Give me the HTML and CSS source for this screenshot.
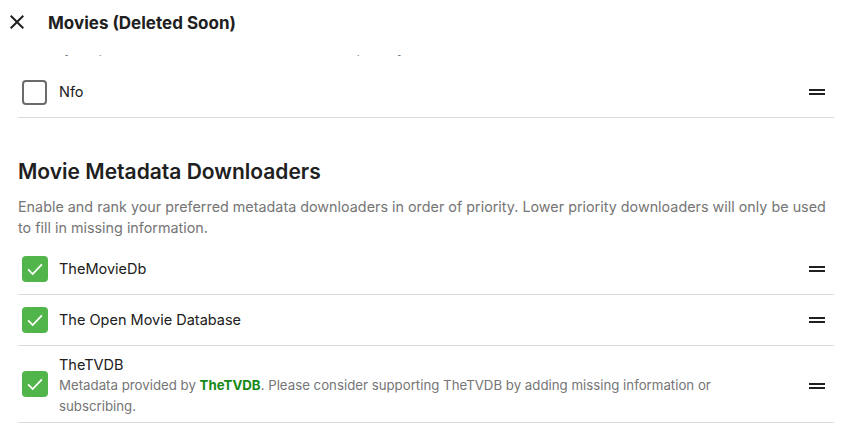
FILE: index.html
```html
<!DOCTYPE html>
<html>
<head>
<meta charset="utf-8">
<link rel="stylesheet" href="styles.css">
</head>
<body>
<header class="topbar">
  <button class="close-btn" aria-label="Close">
    <svg viewBox="0 0 24 24" width="24" height="24"><path d="M19 6.41 17.59 5 12 10.59 6.41 5 5 6.41 10.59 12 5 17.59 6.41 19 12 13.41 17.59 19 19 17.59 13.41 12z" fill="#202020"/></svg>
  </button>
  <h1 class="title">Movies (Deleted Soon)</h1>
</header>
<main class="content">
  <section class="section first">
    <p class="desc hidden-line">Select your preferred metadata savers in order of priority.</p>
    <ul class="list">
      <li class="row">
        <span class="cb"></span>
        <div class="row-body"><div class="row-title">Nfo</div></div>
        <svg class="handle" viewBox="0 0 24 24" width="24" height="24"><path d="M20 9H4v2h16V9zM4 15h16v-2H4v2z" fill="#202020"/></svg>
      </li>
    </ul>
  </section>
  <section class="section">
    <h2 class="heading">Movie Metadata Downloaders</h2>
    <p class="desc last">Enable and rank your preferred metadata downloaders in order of priority. Lower priority downloaders will only be used to fill in missing information.</p>
    <ul class="list">
      <li class="row">
        <span class="cb checked"><svg viewBox="0 0 24 24" width="22" height="22"><path d="M4.5 12.5l5 5L19.5 7" fill="none" stroke="#fff" stroke-width="2"/></svg></span>
        <div class="row-body"><div class="row-title">TheMovieDb</div></div>
        <svg class="handle" viewBox="0 0 24 24" width="24" height="24"><path d="M20 9H4v2h16V9zM4 15h16v-2H4v2z" fill="#202020"/></svg>
      </li>
      <li class="row">
        <span class="cb checked"><svg viewBox="0 0 24 24" width="22" height="22"><path d="M4.5 12.5l5 5L19.5 7" fill="none" stroke="#fff" stroke-width="2"/></svg></span>
        <div class="row-body"><div class="row-title">The Open Movie Database</div></div>
        <svg class="handle" viewBox="0 0 24 24" width="24" height="24"><path d="M20 9H4v2h16V9zM4 15h16v-2H4v2z" fill="#202020"/></svg>
      </li>
      <li class="row tall">
        <span class="cb checked"><svg viewBox="0 0 24 24" width="22" height="22"><path d="M4.5 12.5l5 5L19.5 7" fill="none" stroke="#fff" stroke-width="2"/></svg></span>
        <div class="row-body">
          <div class="row-title">TheTVDB</div>
          <div class="row-desc">Metadata provided by <a class="link" href="#">TheTVDB</a>. Please consider supporting TheTVDB by adding missing information or subscribing.</div>
        </div>
        <svg class="handle" viewBox="0 0 24 24" width="24" height="24"><path d="M20 9H4v2h16V9zM4 15h16v-2H4v2z" fill="#202020"/></svg>
      </li>
    </ul>
  </section>
</main>
</body>
</html>
```

FILE: styles.css
```css
* { box-sizing: border-box; }
html, body { margin: 0; padding: 0; background: #fff; }
body {
  font-family: Inter, "Noto Sans", sans-serif;
  color: #202020;
  width: 850px;
  height: 448px;
  overflow: hidden;
}
.topbar {
  position: relative;
  z-index: 2;
  background: #fff;
  height: 55px;
  display: flex;
  align-items: flex-start;
  padding: 10px 0 0 5px;
}
.close-btn {
  border: 0;
  background: none;
  padding: 0;
  width: 24px;
  height: 24px;
  display: flex;
  margin-right: 19px;
}
.title {
  margin: 0;
  font-size: 17px;
  font-weight: 700;
  line-height: 24px;
  position: relative;
  top: 1px;
}
.content {
  position: relative;
  z-index: 1;
  margin-top: -18px;
  padding: 0 16px 0 18px;
}
.section + .section { margin-top: 41px; }
.heading {
  margin: 0 0 12px;
  font-size: 21px;
  font-weight: 600;
  line-height: 25px;
}
.desc {
  margin: 0 0 7px;
  font-size: 14.35px;
  line-height: 21px;
  color: #757575;
}
.desc.hidden-line { margin-bottom: 9px; }
.desc.last { margin-bottom: 6px; }
.list { list-style: none; margin: 0; padding: 0; }
.row {
  display: flex;
  align-items: center;
  min-height: 51px;
  padding: 7px 5px 7px 4px;
  border-bottom: 1px solid #dcdcdc;
}
.row.tall { padding: 8px 5px 5px 4px; }
.row.tall .row-title { line-height: 21px; }
.row.tall .cb { margin-top: -3px; }
.cb {
  flex: none;
  width: 25px;
  height: 25px;
  border: 2px solid #6b6b6b;
  border-radius: 4px;
  margin-right: 12px;
  display: flex;
  align-items: center;
  justify-content: center;
}
.cb.checked { width: 26px; height: 26px; margin-left: -0.5px; margin-right: 11.5px; background: #52b54b; border-color: #52b54b; }
.row-body { flex: 1; }
.row-title { font-size: 14.5px; line-height: 20px; }
.row-desc { font-size: 13.25px; line-height: 21px; color: #757575; }
.link { color: #168a16; font-weight: 700; text-decoration: none; }
.handle { flex: none; margin-left: 40px; }
```
